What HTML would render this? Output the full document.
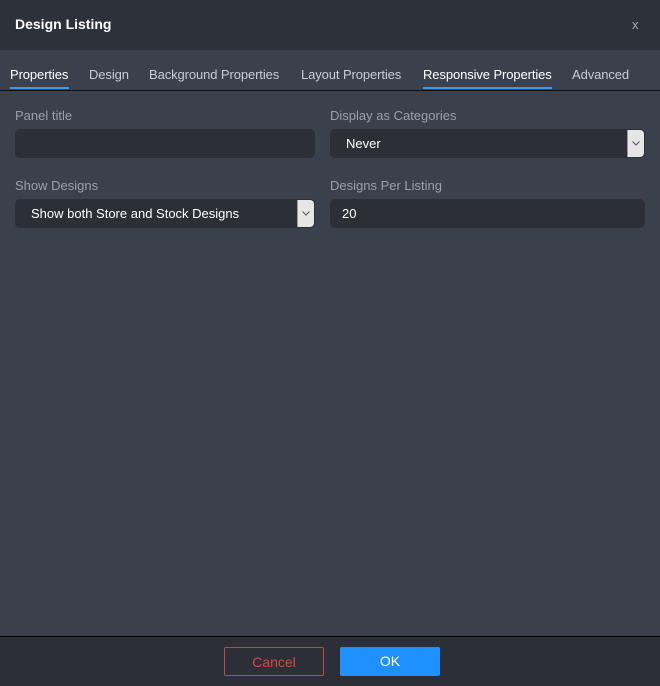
<!DOCTYPE html>
<html><head><style>
*{margin:0;padding:0;box-sizing:border-box}
body{width:660px;height:686px;background:#3a404c;font-family:"Liberation Sans",sans-serif;position:relative;overflow:hidden}
.hdr{position:absolute;left:0;top:0;width:660px;height:50px;background:#2d313a}
.hdr .t{position:absolute;left:15px;top:16px;color:#fff;font-weight:bold;font-size:14px}
.hdr .x{position:absolute;left:632px;top:17px;color:#aaa;font-size:13px}
.tabs{position:absolute;left:0;top:50px;width:660px;height:41px;border-bottom:1px solid #111}
.tab{position:absolute;top:17px;font-size:13px;letter-spacing:-0.1px;color:#c9ccd2;white-space:nowrap}
.tab.a{color:#fff}
.ul{position:absolute;top:87px;height:2px;background:#3e9be9}
.lbl{position:absolute;font-size:13px;color:#9aa0aa}
.inp{position:absolute;height:29px;background:#2c2f36;border-radius:5px;color:#fff;font-size:13px;line-height:29px}
.arr{position:absolute;right:1px;top:1px;width:17px;height:27px;background:#e6e6e6;border-radius:0 4px 4px 0;border-left:1px solid #999}
.arr svg{position:absolute;left:4px;top:11px}
.ftr{position:absolute;left:0;top:636px;width:660px;height:50px;background:#2c2f37;border-top:1px solid #000}
.btn{position:absolute;top:647px;width:100px;height:29px;font-size:14px;text-align:center;line-height:28px;border-radius:2px}
</style></head><body>
<div class="hdr"><div class="t">Design Listing</div><div class="x">x</div></div>
<div class="tabs"></div>
<div class="tab a" style="left:10px;top:67px">Properties</div>
<div class="tab" style="left:89px;top:67px">Design</div>
<div class="tab" style="left:149px;top:67px">Background Properties</div>
<div class="tab" style="left:301px;top:67px">Layout Properties</div>
<div class="tab a" style="left:423px;top:67px">Responsive Properties</div>
<div class="tab" style="left:572px;top:67px">Advanced</div>
<div class="ul" style="left:10px;width:59px"></div>
<div class="ul" style="left:423px;width:129px"></div>
<div class="lbl" style="left:15px;top:108px">Panel title</div>
<div class="inp" style="left:15px;top:129px;width:300px"></div>
<div class="lbl" style="left:330px;top:108px">Display as Categories</div>
<div class="inp" style="left:330px;top:129px;width:315px;padding-left:16px">Never<div class="arr"><svg width="8" height="5"><path d="M0.5 0.5L4 4L7.5 0.5" stroke="#555" fill="none"/></svg></div></div>
<div class="lbl" style="left:15px;top:178px">Show Designs</div>
<div class="inp" style="left:15px;top:199px;width:300px;padding-left:16px">Show both Store and Stock Designs<div class="arr"><svg width="8" height="5"><path d="M0.5 0.5L4 4L7.5 0.5" stroke="#555" fill="none"/></svg></div></div>
<div class="lbl" style="left:330px;top:178px">Designs Per Listing</div>
<div class="inp" style="left:330px;top:199px;width:315px;padding-left:12px">20</div>
<div class="ftr"></div>
<div class="btn" style="left:224px;border:1px solid #c9453e;color:#d9483f">Cancel</div>
<div class="btn" style="left:340px;background:#1e90ff;color:#fff">OK</div>
</body></html>
